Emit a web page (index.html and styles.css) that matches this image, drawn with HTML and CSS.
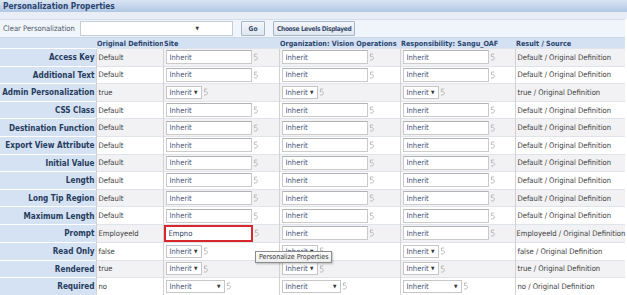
FILE: index.html
```html
<!DOCTYPE html>
<html lang="en">
<head>
    <meta charset="UTF-8">
    <title>Personalization Properties</title>
    <link rel="stylesheet" href="styles.css">
</head>
<body>
<svg width="0" height="0" class="defs">
    <symbol id="pz" viewBox="0 0 5 8">
        <path d="M4.2 1H1.4V3.6C3.2 3 4.4 3.9 4.4 5.2C4.4 6.8 2.6 7.4 1 6.9" fill="none" stroke="#a8a8a8" stroke-width="0.75"/>
    </symbol>
</svg>
<div class="panel">
    <div class="titlebar">Personalization Properties</div>
    <div class="band"></div>
    <div class="toolbar">
        <span class="tlabel">Clear Personalization</span>
        <span class="sel clear"><span class="arr">&#9660;</span></span>
        <button class="btn go">Go</button>
        <button class="btn">Choose Levels Displayed</button>
    </div>

    <table class="props">
        <colgroup>
            <col class="c-lbl"><col class="c-orig"><col class="c-site"><col class="c-org"><col class="c-resp"><col class="c-res">
        </colgroup>
        <tr class="head">
            <th></th>
            <th>Original Definition</th>
            <th>Site</th>
            <th>Organization: Vision Operations</th>
            <th>Responsibility: Sangu_OAF</th>
            <th>Result / Source</th>
        </tr>
        <tr class="odd">
            <td class="lbl">Access Key</td><td>Default</td>
            <td><input class="fld" value="Inherit"><svg class="pz"><use href="#pz"/></svg></td>
            <td><input class="fld" value="Inherit"><svg class="pz"><use href="#pz"/></svg></td>
            <td><input class="fld" value="Inherit"><svg class="pz"><use href="#pz"/></svg></td>
            <td>Default / Original Definition</td>
        </tr>
        <tr>
            <td class="lbl">Additional Text</td><td>Default</td>
            <td><input class="fld" value="Inherit"><svg class="pz"><use href="#pz"/></svg></td>
            <td><input class="fld" value="Inherit"><svg class="pz"><use href="#pz"/></svg></td>
            <td><input class="fld" value="Inherit"><svg class="pz"><use href="#pz"/></svg></td>
            <td>Default / Original Definition</td>
        </tr>
        <tr class="odd">
            <td class="lbl">Admin Personalization</td><td>true</td>
            <td><span class="sel">Inherit<span class="arr">&#9660;</span></span><svg class="pz"><use href="#pz"/></svg></td>
            <td><span class="sel">Inherit<span class="arr">&#9660;</span></span><svg class="pz"><use href="#pz"/></svg></td>
            <td><span class="sel">Inherit<span class="arr">&#9660;</span></span><svg class="pz"><use href="#pz"/></svg></td>
            <td>true / Original Definition</td>
        </tr>
        <tr>
            <td class="lbl">CSS Class</td><td>Default</td>
            <td><input class="fld" value="Inherit"><svg class="pz"><use href="#pz"/></svg></td>
            <td><input class="fld" value="Inherit"><svg class="pz"><use href="#pz"/></svg></td>
            <td><input class="fld" value="Inherit"><svg class="pz"><use href="#pz"/></svg></td>
            <td>Default / Original Definition</td>
        </tr>
        <tr class="odd">
            <td class="lbl">Destination Function</td><td>Default</td>
            <td><input class="fld" value="Inherit"><svg class="pz"><use href="#pz"/></svg></td>
            <td><input class="fld" value="Inherit"><svg class="pz"><use href="#pz"/></svg></td>
            <td><input class="fld" value="Inherit"><svg class="pz"><use href="#pz"/></svg></td>
            <td>Default / Original Definition</td>
        </tr>
        <tr>
            <td class="lbl">Export View Attribute</td><td>Default</td>
            <td><input class="fld" value="Inherit"><svg class="pz"><use href="#pz"/></svg></td>
            <td><input class="fld" value="Inherit"><svg class="pz"><use href="#pz"/></svg></td>
            <td><input class="fld" value="Inherit"><svg class="pz"><use href="#pz"/></svg></td>
            <td>Default / Original Definition</td>
        </tr>
        <tr class="odd">
            <td class="lbl">Initial Value</td><td>Default</td>
            <td><input class="fld" value="Inherit"><svg class="pz"><use href="#pz"/></svg></td>
            <td><input class="fld" value="Inherit"><svg class="pz"><use href="#pz"/></svg></td>
            <td><input class="fld" value="Inherit"><svg class="pz"><use href="#pz"/></svg></td>
            <td>Default / Original Definition</td>
        </tr>
        <tr>
            <td class="lbl">Length</td><td>Default</td>
            <td><input class="fld" value="Inherit"><svg class="pz"><use href="#pz"/></svg></td>
            <td><input class="fld" value="Inherit"><svg class="pz"><use href="#pz"/></svg></td>
            <td><input class="fld" value="Inherit"><svg class="pz"><use href="#pz"/></svg></td>
            <td>Default / Original Definition</td>
        </tr>
        <tr class="odd">
            <td class="lbl">Long Tip Region</td><td>Default</td>
            <td><input class="fld" value="Inherit"><svg class="pz"><use href="#pz"/></svg></td>
            <td><input class="fld" value="Inherit"><svg class="pz"><use href="#pz"/></svg></td>
            <td><input class="fld" value="Inherit"><svg class="pz"><use href="#pz"/></svg></td>
            <td>Default / Original Definition</td>
        </tr>
        <tr>
            <td class="lbl">Maximum Length</td><td>Default</td>
            <td><input class="fld" value="Inherit"><svg class="pz"><use href="#pz"/></svg></td>
            <td><input class="fld" value="Inherit"><svg class="pz"><use href="#pz"/></svg></td>
            <td><input class="fld" value="Inherit"><svg class="pz"><use href="#pz"/></svg></td>
            <td>Default / Original Definition</td>
        </tr>
        <tr class="odd">
            <td class="lbl">Prompt</td><td>EmployeeId</td>
            <td><input class="fld hot" value="Empno"><svg class="pz"><use href="#pz"/></svg></td>
            <td><input class="fld" value="Inherit"><svg class="pz"><use href="#pz"/></svg></td>
            <td><input class="fld" value="Inherit"><svg class="pz"><use href="#pz"/></svg></td>
            <td class="tight">EmployeeId / Original Definition</td>
        </tr>
        <tr>
            <td class="lbl">Read Only</td><td>false</td>
            <td><span class="sel">Inherit<span class="arr">&#9660;</span></span><svg class="pz"><use href="#pz"/></svg></td>
            <td><span class="sel">Inherit<span class="arr">&#9660;</span></span><svg class="pz"><use href="#pz"/></svg></td>
            <td><span class="sel">Inherit<span class="arr">&#9660;</span></span><svg class="pz"><use href="#pz"/></svg></td>
            <td>false / Original Definition</td>
        </tr>
        <tr class="odd">
            <td class="lbl">Rendered</td><td>true</td>
            <td><span class="sel">Inherit<span class="arr">&#9660;</span></span><svg class="pz"><use href="#pz"/></svg></td>
            <td><span class="sel">Inherit<span class="arr">&#9660;</span></span><svg class="pz"><use href="#pz"/></svg></td>
            <td><span class="sel">Inherit<span class="arr">&#9660;</span></span><svg class="pz"><use href="#pz"/></svg></td>
            <td>true / Original Definition</td>
        </tr>
        <tr>
            <td class="lbl">Required</td><td>no</td>
            <td><span class="sel long">Inherit<span class="arr">&#9660;</span></span><svg class="pz"><use href="#pz"/></svg></td>
            <td><span class="sel long">Inherit<span class="arr">&#9660;</span></span><svg class="pz"><use href="#pz"/></svg></td>
            <td><span class="sel long">Inherit<span class="arr">&#9660;</span></span><svg class="pz"><use href="#pz"/></svg></td>
            <td>no / Original Definition</td>
        </tr>
    </table>

    <div class="tip">Personalize Properties</div>
</div>
</body>
</html>
```

FILE: styles.css
```css
body {
    margin: 0;
    background: #fff;
    font-family: "DejaVu Sans Condensed", "DejaVu Sans", sans-serif;
    font-size: 7.6px;
    color: #3b3b3b;
}
.defs {
    position: absolute;
}
.panel {
    position: relative;
    width: 627px;
}
.titlebar {
    height: 12px;
    line-height: 12px;
    padding-left: 3px;
    font-size: 8.3px;
    font-weight: bold;
    color: #2b4570;
    background: linear-gradient(#d9e5f4, #b1c7e4);
}
.band {
    height: 7px;
    background: #e9eef6;
}
.toolbar {
    display: flex;
    align-items: center;
    height: 17px;
    padding-left: 3px;
    background: #f0f4fb;
    border-top: 1px solid #d3deed;
    border-bottom: 1px solid #c9d7e9;
    margin-right: 2px;
}
.tlabel {
    width: 77px;
    color: #4b5566;
}
.sel {
    position: relative;
    display: inline-block;
    box-sizing: border-box;
    width: 36px;
    height: 13px;
    line-height: 11px;
    padding-left: 3px;
    border: 1px solid #c6c6c6;
    background: #fff;
    color: #3f5276;
    vertical-align: middle;
}
.sel .arr {
    position: absolute;
    right: 3px;
    top: 0;
    font-size: 5px;
    line-height: 11px;
    color: #333;
}
.sel.clear {
    width: 153px;
    height: 15px;
    border-color: #c3ccd8;
}
.sel.clear .arr {
    right: 33px;
    line-height: 13px;
}
.sel.long {
    width: 59px;
}
.btn {
    height: 15px;
    margin-left: 8px;
    padding: 0 3px;
    font-family: inherit;
    font-size: 6.6px;
    letter-spacing: -0.35px;
    font-weight: bold;
    color: #3a4d6e;
    background: linear-gradient(#f4f7fb, #dfe6ef);
    border: 1px solid #a7b5c8;
    border-radius: 1px;
}
.btn.go {
    width: 24px;
    padding: 0;
    letter-spacing: 0;
}

.props {
    width: 625px;
    table-layout: fixed;
    border-collapse: collapse;
}
.c-lbl { width: 96px; }
.c-orig { width: 67px; }
.c-site { width: 116px; }
.c-org { width: 121px; }
.c-resp { width: 115px; }
.c-res { width: 110px; }

.props th {
    height: 10px;
    padding: 0 1px;
    text-align: left;
    font-size: 7.2px;
    font-weight: bold;
    color: #2b4570;
    background: #d3e1f2;
    white-space: nowrap;
    overflow: hidden;
}
.props td {
    height: 16.6px;
    padding: 0 2px;
    white-space: nowrap;
    border-top: 1px solid #dfe3ea;
    border-left: 1px solid #d2d2d2;
    background: #fff;
}
.props tr.odd td {
    background: #f2f2f4;
}
.props td.lbl {
    text-align: right;
    font-size: 8.1px;
    font-weight: bold;
    color: #273c5e;
    background: #d4e2f3;
    border-top: 1px solid #fff;
    border-left: none;
    padding-right: 1px;
}
.props tr.odd td.lbl {
    background: #d4e2f3;
}
.props td.tight {
    padding-left: 1px;
    overflow: visible;
}
.fld {
    box-sizing: border-box;
    width: 86px;
    height: 14px;
    margin: 0;
    padding: 0 3px;
    font-family: inherit;
    font-size: 7.6px;
    color: #3f5276;
    background: #fff;
    border: 1px solid #cacaca;
    border-top-color: #b2b2b2;
    vertical-align: middle;
}
.fld.hot {
    width: 89px;
    height: 17px;
    margin-left: -2px;
    border: 2px solid #d9262a;
    color: #2f3f5f;
}
.pz {
    width: 5px;
    height: 8px;
    margin-left: 1px;
    vertical-align: middle;
}
.tip {
    position: absolute;
    left: 255px;
    top: 251px;
    padding: 1px 3px;
    font-size: 7px;
    color: #333;
    background: linear-gradient(#fbfbfb, #ececec);
    border: 1px solid #8d8d8d;
    box-shadow: 1px 1px 2px rgba(0, 0, 0, 0.25);
}
```
